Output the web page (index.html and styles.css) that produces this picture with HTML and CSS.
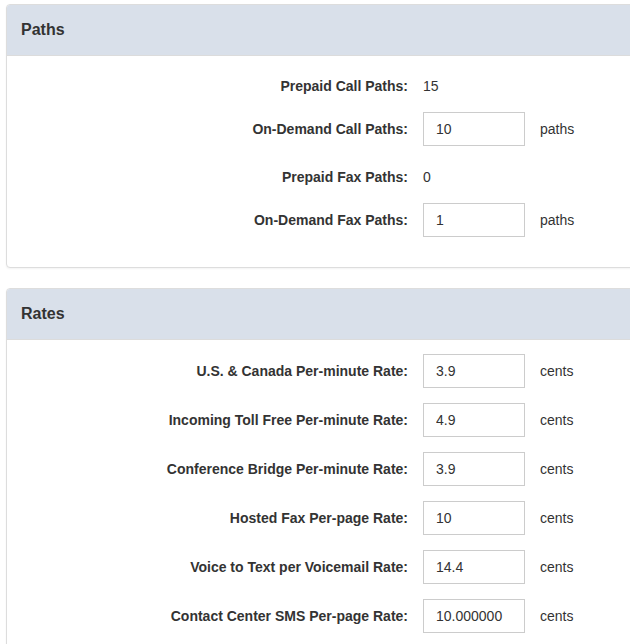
FILE: index.html
```html
<!DOCTYPE html>
<html lang="en">
<head>
  <meta charset="UTF-8">
  <meta name="viewport" content="width=device-width, initial-scale=1.0">
  <title>Account Settings</title>
  <link rel="stylesheet" href="styles.css">
</head>
<body>

  <div class="panel">
    <div class="panel-heading">Paths</div>
    <div class="panel-body">
      <div class="form-row static">
        <label>Prepaid Call Paths:</label>
        <span class="value">15</span>
      </div>
      <div class="form-row">
        <label for="callPaths">On-Demand Call Paths:</label>
        <input type="text" id="callPaths" value="10">
        <span class="unit">paths</span>
      </div>
      <div class="form-row static">
        <label>Prepaid Fax Paths:</label>
        <span class="value">0</span>
      </div>
      <div class="form-row">
        <label for="faxPaths">On-Demand Fax Paths:</label>
        <input type="text" id="faxPaths" value="1">
        <span class="unit">paths</span>
      </div>
    </div>
  </div>

  <div class="panel">
    <div class="panel-heading">Rates</div>
    <div class="panel-body">
      <div class="form-row">
        <label for="usRate">U.S. &amp; Canada Per-minute Rate:</label>
        <input type="text" id="usRate" value="3.9">
        <span class="unit">cents</span>
      </div>
      <div class="form-row">
        <label for="tollFreeRate">Incoming Toll Free Per-minute Rate:</label>
        <input type="text" id="tollFreeRate" value="4.9">
        <span class="unit">cents</span>
      </div>
      <div class="form-row">
        <label for="bridgeRate">Conference Bridge Per-minute Rate:</label>
        <input type="text" id="bridgeRate" value="3.9">
        <span class="unit">cents</span>
      </div>
      <div class="form-row">
        <label for="faxRate">Hosted Fax Per-page Rate:</label>
        <input type="text" id="faxRate" value="10">
        <span class="unit">cents</span>
      </div>
      <div class="form-row">
        <label for="voicemailRate">Voice to Text per Voicemail Rate:</label>
        <input type="text" id="voicemailRate" value="14.4">
        <span class="unit">cents</span>
      </div>
      <div class="form-row">
        <label for="smsRate">Contact Center SMS Per-page Rate:</label>
        <input type="text" id="smsRate" value="10.000000">
        <span class="unit">cents</span>
      </div>
    </div>
  </div>

</body>
</html>
```

FILE: styles.css
```css
body {
  margin: 0;
  padding: 4px 0 0 6px;
  font-family: "Liberation Sans", Arial, sans-serif;
  font-size: 14px;
  line-height: 20px;
  color: #333;
  background-color: #fff;
  overflow: hidden;
}
.panel {
  margin-right: -20px;
  margin-bottom: 20px;
  border: 1px solid #ddd;
  border-radius: 4px;
  background-color: #fff;
  box-shadow: 0 1px 2px rgba(0, 0, 0, 0.05);
}
.panel-heading {
  padding: 15px 14px;
  font-size: 16px;
  font-weight: bold;
  line-height: 20px;
  background-color: #d9e0ea;
  border-bottom: 1px solid #dcdcdc;
  border-radius: 3px 3px 0 0;
}
.panel-body {
  padding: 14px 15px 15px;
}
.form-row {
  display: grid;
  grid-template-columns: 386px 102px auto;
  column-gap: 15px;
  align-items: center;
  height: 34px;
  margin-bottom: 15px;
}
.form-row.static {
  height: 32px;
  margin-bottom: 10px;
}
.form-row label {
  text-align: right;
  font-weight: bold;
}
.form-row input {
  box-sizing: border-box;
  width: 102px;
  height: 34px;
  padding: 0 12px;
  border: 1px solid #ccc;
  border-radius: 0;
  font-family: inherit;
  font-size: 14px;
  color: #333;
}
```
